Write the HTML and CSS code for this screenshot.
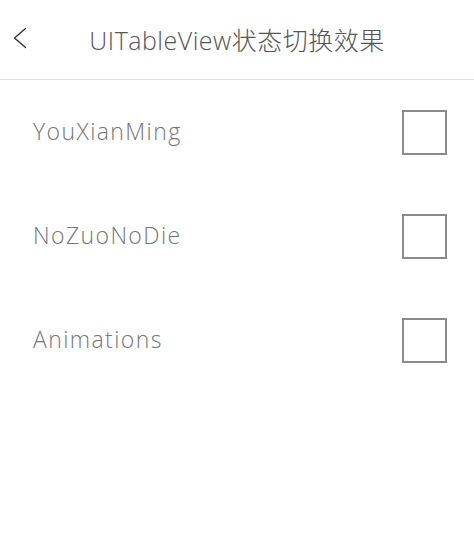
FILE: index.html
```html
<!DOCTYPE html>
<html lang="zh">
<head>
<meta charset="utf-8">
<title>UITableView状态切换效果</title>
<link rel="stylesheet" href="styles.css">
</head>
<body>
<div class="screen">
  <header class="nav">
    <button class="back" aria-label="返回">
      <svg width="16" height="22" viewBox="0 0 16 22"><path d="M13.5 1.5 L2.5 11 L13.5 20.5" fill="none" stroke="#333" stroke-width="1.4" stroke-linecap="round" stroke-linejoin="round"/></svg>
    </button>
    <h1 class="title">UITableView状态切换效果</h1>
  </header>
  <ul class="list">
    <li class="row"><span class="label">YouXianMing</span><span class="check"></span></li>
    <li class="row"><span class="label">NoZuoNoDie</span><span class="check"></span></li>
    <li class="row"><span class="label">Animations</span><span class="check"></span></li>
  </ul>
</div>
</body>
</html>
```
FILE: styles.css
```css
html, body {
  margin: 0;
  padding: 0;
  background: #fff;
}
.screen {
  width: 474px;
  height: 543px;
  font-family: "Open Sans", "Noto Sans CJK SC", sans-serif;
}
.nav {
  height: 79px;
  border-bottom: 1px solid #e2e2e2;
  display: flex;
  align-items: center;
  justify-content: center;
  position: relative;
}
.back {
  position: absolute;
  left: 12px;
  top: 27px;
  padding: 0;
  border: 0;
  background: none;
  display: flex;
}
.title {
  margin: 0 0 2px 0;
  font-size: 25px;
  font-weight: 300;
  letter-spacing: 0.5px;
  color: #555;
  white-space: nowrap;
}
.list {
  list-style: none;
  margin: 0;
  padding: 0;
}
.row {
  height: 104px;
  display: flex;
  align-items: center;
  justify-content: space-between;
  padding: 0 27px 0 33px;
}
.label {
  font-size: 23px;
  font-weight: 300;
  letter-spacing: 1.4px;
  color: #767676;
  margin-top: -2px;
}
.check {
  width: 41px;
  height: 41px;
  border: 2px solid #8a8a8a;
}
```
